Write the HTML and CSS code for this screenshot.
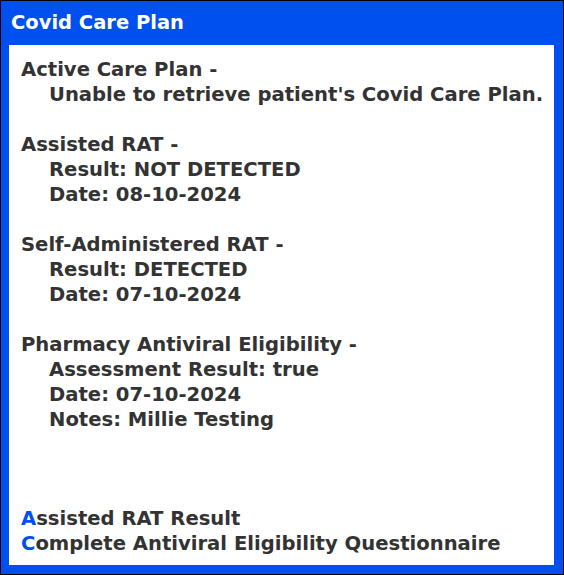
FILE: index.html
```html
<!DOCTYPE html>
<html>
<head>
<meta charset="utf-8">
<link rel="stylesheet" href="styles.css">
</head>
<body>
<div class="frame">
  <div class="title">Covid Care Plan</div>
  <div class="panel">
    <div class="section">
      <div class="head">Active Care Plan -</div>
      <div class="item">Unable to retrieve patient's Covid Care Plan.</div>
    </div>
    <div class="section">
      <div class="head">Assisted RAT -</div>
      <div class="item">Result: NOT DETECTED</div>
      <div class="item">Date: 08-10-2024</div>
    </div>
    <div class="section">
      <div class="head">Self-Administered RAT -</div>
      <div class="item">Result: DETECTED</div>
      <div class="item">Date: 07-10-2024</div>
    </div>
    <div class="section">
      <div class="head">Pharmacy Antiviral Eligibility -</div>
      <div class="item">Assessment Result: true</div>
      <div class="item">Date: 07-10-2024</div>
      <div class="item">Notes: Millie Testing</div>
    </div>
    <div class="links">
      <div class="link"><span class="key">A</span>ssisted RAT Result</div>
      <div class="link"><span class="key">C</span>omplete Antiviral Eligibility Questionnaire</div>
    </div>
  </div>
</div>
</body>
</html>
```
FILE: styles.css
```css
html, body {
  margin: 0;
  padding: 0;
}
body {
  width: 564px;
  height: 575px;
  font-family: "DejaVu Sans", Verdana, sans-serif;
  font-weight: bold;
}
.frame {
  box-sizing: border-box;
  width: 564px;
  height: 575px;
  border: 1px solid #000;
  background: #0050ef;
  display: flex;
  flex-direction: column;
  padding: 0 9px 9px 8px;
}
.title {
  color: #fff;
  font-size: 19.5px;
  height: 44px;
  line-height: 43px;
  padding-left: 2px;
}
.panel {
  flex: 1;
  background: #fff;
  color: #333;
  font-size: 19.6px;
  line-height: 25px;
  padding: 12px 8px 9px 12px;
  display: flex;
  flex-direction: column;
}
.section {
  margin-bottom: 25px;
}
.item {
  padding-left: 28px;
  white-space: nowrap;
}
.links {
  margin-top: auto;
}
.key {
  color: #0050ef;
}
```
